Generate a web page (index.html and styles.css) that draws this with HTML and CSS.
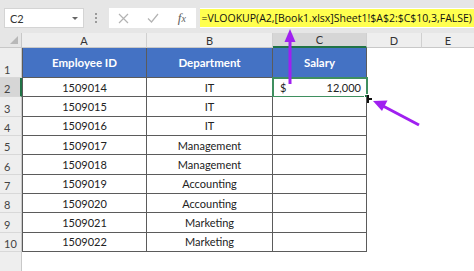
FILE: index.html
```html
<!DOCTYPE html>
<html lang="en">

<head>
    <meta charset="UTF-8">
    <title>VLOOKUP from another workbook</title>
    <link rel="stylesheet" href="styles.css">
</head>

<body>
    <div class="toolbar">
        <div class="name-box">
            <span>C2</span>
            <span class="caret"></span>
        </div>
        <div class="grip">
            <span></span><span></span><span></span>
        </div>
        <div class="fx-buttons">
            <svg class="cancel" width="11" height="11" viewBox="0 0 11 11">
                <path d="M1 1 L10 10 M10 1 L1 10" stroke="#b3b3b3" stroke-width="1.2" fill="none" />
            </svg>
            <svg class="enter" width="12" height="10" viewBox="0 0 12 10">
                <path d="M1 5.5 L4.5 9 L11 1" stroke="#b3b3b3" stroke-width="1.2" fill="none" />
            </svg>
            <span class="fx">f<i>x</i></span>
        </div>
        <div class="formula">
            <span class="formula-text">=VLOOKUP(A2,[Book1.xlsx]Sheet1!$A$2:$C$10,3,FALSE)</span>
        </div>
    </div>

    <div class="sheet">
        <!-- column headers -->
        <div class="corner"><span class="corner-mark"></span></div>
        <div class="col-head">A</div>
        <div class="col-head">B</div>
        <div class="col-head active">C</div>
        <div class="col-head">D</div>
        <div class="col-head last">E</div>

        <!-- row 1 -->
        <div class="row-head">1</div>
        <div class="cell head first">Employee ID</div>
        <div class="cell head">Department</div>
        <div class="cell head">Salary</div>
        <div class="blank"></div>
        <div class="blank"></div>

        <!-- row 2 -->
        <div class="row-head active">2</div>
        <div class="cell first">1509014</div>
        <div class="cell">IT</div>
        <div class="cell money selected"><span>$</span><span>12,000</span>
            <span class="fill-handle"></span>
            <span class="cross"></span>
        </div>
        <div class="blank"></div>
        <div class="blank"></div>

        <div class="row-head">3</div>
        <div class="cell first">1509015</div>
        <div class="cell">IT</div>
        <div class="cell"></div>
        <div class="blank"></div>
        <div class="blank"></div>

        <div class="row-head">4</div>
        <div class="cell first">1509016</div>
        <div class="cell">IT</div>
        <div class="cell"></div>
        <div class="blank"></div>
        <div class="blank"></div>

        <div class="row-head">5</div>
        <div class="cell first">1509017</div>
        <div class="cell">Management</div>
        <div class="cell"></div>
        <div class="blank"></div>
        <div class="blank"></div>

        <div class="row-head">6</div>
        <div class="cell first">1509018</div>
        <div class="cell">Management</div>
        <div class="cell"></div>
        <div class="blank"></div>
        <div class="blank"></div>

        <div class="row-head">7</div>
        <div class="cell first">1509019</div>
        <div class="cell">Accounting</div>
        <div class="cell"></div>
        <div class="blank"></div>
        <div class="blank"></div>

        <div class="row-head">8</div>
        <div class="cell first">1509020</div>
        <div class="cell">Accounting</div>
        <div class="cell"></div>
        <div class="blank"></div>
        <div class="blank"></div>

        <div class="row-head">9</div>
        <div class="cell first">1509021</div>
        <div class="cell">Marketing</div>
        <div class="cell"></div>
        <div class="blank"></div>
        <div class="blank"></div>

        <div class="row-head">10</div>
        <div class="cell first">1509022</div>
        <div class="cell">Marketing</div>
        <div class="cell"></div>
        <div class="blank"></div>
        <div class="blank"></div>

        <div class="row-head empty"></div>
        <div class="blank"></div>
        <div class="blank"></div>
        <div class="blank"></div>
        <div class="blank"></div>
        <div class="blank"></div>
    </div>

    <!-- annotation arrows -->
    <svg class="arrows" width="474" height="271" viewBox="0 0 474 271">
        <path d="M290 84 L290 40" stroke="#a020f0" stroke-width="3" fill="none" />
        <path d="M290 29 L284.5 42 L295.5 42 Z" fill="#a020f0" />
        <path d="M419 125 L383 106" stroke="#a020f0" stroke-width="3" fill="none" />
        <path d="M373 101 L387.5 100.5 L382 111 Z" fill="#a020f0" />
    </svg>
</body>

</html>
```

FILE: styles.css
```css
* {
    margin: 0;
    padding: 0;
    box-sizing: border-box;
}

body {
    width: 474px;
    height: 271px;
    overflow: hidden;
    background-color: #ffffff;
    font-family: Lato, "Open Sans", sans-serif;
    position: relative;
}

.toolbar {
    height: 33px;
    background-color: #e6e6e6;
    display: flex;
    align-items: flex-start;
    padding-top: 8px;
    padding-left: 4px;
}

.name-box {
    width: 80px;
    height: 20px;
    background-color: #ffffff;
    border: 1px solid #d4d4d4;
    display: flex;
    align-items: center;
    justify-content: space-between;
    padding: 0 5px 0 5px;
    font-size: 11px;
    color: #333333;
}

.caret {
    width: 0;
    height: 0;
    border-left: 3px solid transparent;
    border-right: 3px solid transparent;
    border-top: 3px solid #666666;
}

.grip {
    width: 25px;
    height: 20px;
    display: flex;
    flex-direction: column;
    align-items: center;
    justify-content: center;
    gap: 2px;
}

.grip span {
    width: 2px;
    height: 2px;
    background-color: #9a9a9a;
}

.fx-buttons {
    width: 87px;
    height: 20px;
    background-color: #ffffff;
    display: flex;
    align-items: center;
    padding-left: 9px;
    gap: 18px;
}

.fx {
    font-family: "Liberation Serif", serif;
    font-style: italic;
    font-size: 13px;
    color: #5e5e5e;
    margin-left: 1px;
}

.fx i {
    font-size: 10px;
}

.formula {
    flex: 1;
    height: 20px;
    margin-left: 4px;
    background-color: #ffffff;
    display: flex;
    align-items: center;
}

.formula-text {
    background-color: #ffff4f;
    font-family: "Open Sans", sans-serif;
    font-size: 10.5px;
    line-height: 18px;
    padding: 0 2px;
    color: #111111;
    white-space: nowrap;
}

.sheet {
    display: grid;
    grid-template-columns: 22px 125px 126px 94px 55px 52px;
    grid-template-rows: 15px 30px repeat(9, 19.33px) 1fr;
    height: 238px;
}

.corner {
    background-color: #e6e6e6;
    border-right: 1px solid #c8c8c8;
    border-bottom: 1px solid #c8c8c8;
    position: relative;
}

.corner-mark {
    position: absolute;
    right: 3px;
    bottom: 3px;
    width: 0;
    height: 0;
    border-left: 8px solid transparent;
    border-bottom: 8px solid #b8b8b8;
}

.col-head {
    background-color: #eeeeee;
    border-right: 1px solid #d0d0d0;
    border-bottom: 1px solid #c8c8c8;
    font-size: 11px;
    color: #333333;
    display: flex;
    align-items: center;
    justify-content: center;
}

.col-head.active {
    background-color: #d6d6d6;
    border-bottom: 2px solid #217346;
}

.col-head.last {
    border-right: none;
}

.row-head {
    background-color: #eeeeee;
    border-right: 1px solid #c8c8c8;
    border-bottom: 1px solid #d8d8d8;
    font-size: 11px;
    color: #444444;
    display: flex;
    align-items: flex-end;
    padding-left: 4px;
    padding-bottom: 1px;
}

.row-head.active {
    background-color: #d6d6d6;
    border-right: 2px solid #217346;
}

.row-head.empty {
    border-bottom: none;
}

.cell {
    background-color: #ffffff;
    border-right: 1px solid #5b5b5b;
    border-bottom: 1px solid #5b5b5b;
    font-size: 11px;
    color: #222222;
    display: flex;
    align-items: center;
    justify-content: center;
    position: relative;
}

.cell.first {
    border-left: 1px solid #5b5b5b;
}

.cell.head {
    background-color: #4472c4;
    color: #ffffff;
    font-weight: bold;
    font-size: 11.5px;
}

.cell.money {
    justify-content: space-between;
    padding: 0 5px 0 7px;
}

.cell.selected {
    outline: 2px solid #3f8f5f;
    outline-offset: -1px;
}

.fill-handle {
    position: absolute;
    right: -4px;
    bottom: -4px;
    width: 6px;
    height: 6px;
    background-color: #217346;
    border: 1px solid #ffffff;
}

.cross {
    position: absolute;
    right: -6px;
    bottom: -7px;
    width: 8px;
    height: 8px;
    background:
        linear-gradient(#111111, #111111) center / 8px 2px no-repeat,
        linear-gradient(#111111, #111111) center / 2px 8px no-repeat;
}

.blank {
    background-color: #ffffff;
}

.arrows {
    position: absolute;
    left: 0;
    top: 0;
    pointer-events: none;
}
```
